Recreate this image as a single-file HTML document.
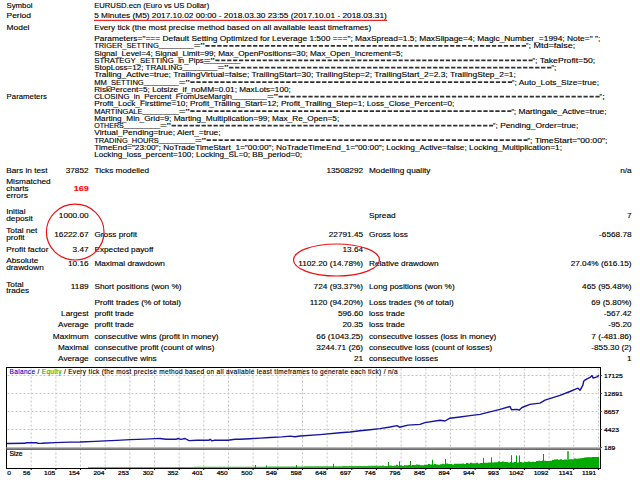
<!DOCTYPE html>
<html><head><meta charset="utf-8"><style>
html,body{margin:0;padding:0;background:#fff;width:640px;height:480px;overflow:hidden}
svg{display:block}
text{font-family:"Liberation Sans",sans-serif;font-size:7px;fill:#000}
text{stroke:#000;stroke-width:0.12px}
text.ax{font-size:6px;stroke-width:0.22px}
</style></head><body>
<svg width="640" height="480" viewBox="0 0 640 480">
<text x="6.5" y="7.6" textLength="26" lengthAdjust="spacingAndGlyphs">Symbol</text>
<text x="94.2" y="7.6" textLength="115" lengthAdjust="spacingAndGlyphs">EURUSD.ecn (Euro vs US Dollar)</text>
<text x="6.5" y="17.8" textLength="24.5" lengthAdjust="spacingAndGlyphs">Period</text>
<text x="94.2" y="17.8" textLength="292.6" lengthAdjust="spacingAndGlyphs">5 Minutes (M5) 2017.10.02 00:00 - 2018.03.30 23:55 (2017.10.01 - 2018.03.31)</text>
<rect x="94" y="19.8" width="293" height="1.1" fill="#f01010"/>
<text x="6.5" y="29.6" textLength="23" lengthAdjust="spacingAndGlyphs">Model</text>
<text x="94.2" y="29.6" textLength="277" lengthAdjust="spacingAndGlyphs">Every tick (the most precise method based on all available least timeframes)</text>
<text x="6.6" y="99" textLength="40.3" lengthAdjust="spacingAndGlyphs">Parameters</text>
<text x="94.2" y="41.0" textLength="506.1" lengthAdjust="spacingAndGlyphs">Parameters=&quot;=== Default Setting Optimized for Leverage 1:500 ===&quot;; MaxSpread=1.5; MaxSlipage=4; Magic_Number_=1994; Note=&quot; &quot;;</text>
<text x="94.2" y="48.25" textLength="64.55" lengthAdjust="spacingAndGlyphs">TRIGER_SETTING</text>
<text x="158.75" y="47.35" textLength="35.0" lengthAdjust="spacingAndGlyphs">________</text>
<text x="193.75" y="48.25" textLength="11.0" lengthAdjust="spacingAndGlyphs">=&quot;</text>
<line x1="205.35" y1="45.85" x2="526.00" y2="45.85" stroke="#303030" stroke-width="1.7" stroke-dasharray="4.27 1.7"/>
<text x="526.0" y="48.25" textLength="2.4" lengthAdjust="spacingAndGlyphs">&quot;</text>
<text x="528.4" y="48.25" textLength="46.8" lengthAdjust="spacingAndGlyphs">; Mtd=false;</text>
<text x="94.2" y="55.5" textLength="308.6" lengthAdjust="spacingAndGlyphs">Signal_Level=4; Signal_Limit=99; Max_OpenPositions=30; Max_Open_Increment=5;</text>
<text x="94.2" y="62.75" textLength="109.55" lengthAdjust="spacingAndGlyphs">STRATEGY_SETTING_in_Pips</text>
<text transform="translate(203.75 61.85) scale(1.18 1)">________</text>
<text x="203.75" y="62.75" textLength="11.0" lengthAdjust="spacingAndGlyphs">=&quot;</text>
<line x1="215.35" y1="60.35" x2="532.60" y2="60.35" stroke="#303030" stroke-width="1.7" stroke-dasharray="4.21 1.7"/>
<text x="532.6" y="62.75" textLength="2.4" lengthAdjust="spacingAndGlyphs">&quot;</text>
<text x="535" y="62.75" textLength="60.2" lengthAdjust="spacingAndGlyphs">; TakeProfit=50;</text>
<text x="94.2" y="70.0" textLength="88.3" lengthAdjust="spacingAndGlyphs">StopLoss=12; TRAILING</text>
<text x="182.5" y="69.1" textLength="35.0" lengthAdjust="spacingAndGlyphs">________</text>
<text x="217.5" y="70.0" textLength="11.0" lengthAdjust="spacingAndGlyphs">=&quot;</text>
<line x1="229.10" y1="67.60" x2="551.50" y2="67.60" stroke="#303030" stroke-width="1.7" stroke-dasharray="4.30 1.7"/>
<text x="551.5" y="70.0" textLength="2.4" lengthAdjust="spacingAndGlyphs">&quot;</text>
<text x="553.9" y="70.0" textLength="2.3" lengthAdjust="spacingAndGlyphs">;</text>
<text x="94.2" y="77.25" textLength="421.7" lengthAdjust="spacingAndGlyphs">Trailing_Active=true; TrailingVirtual=false; TrailingStart=30; TrailingStep=2; TrailingStart_2=2.3; TrailingStep_2=1;</text>
<text x="94.2" y="84.5" textLength="49.55" lengthAdjust="spacingAndGlyphs">MM_SETTING</text>
<text x="143.75" y="83.6" textLength="35.0" lengthAdjust="spacingAndGlyphs">________</text>
<text x="178.75" y="84.5" textLength="11.0" lengthAdjust="spacingAndGlyphs">=&quot;</text>
<line x1="190.35" y1="82.10" x2="512.10" y2="82.10" stroke="#303030" stroke-width="1.7" stroke-dasharray="4.29 1.7"/>
<text x="512.1" y="84.5" textLength="2.4" lengthAdjust="spacingAndGlyphs">&quot;</text>
<text x="514.5" y="84.5" textLength="84.5" lengthAdjust="spacingAndGlyphs">; Auto_Lots_Size=true;</text>
<text x="94.2" y="91.75" textLength="196.6" lengthAdjust="spacingAndGlyphs">RiskPercent=5; Lotsize_if_noMM=0.01; MaxLots=100;</text>
<text x="94.2" y="99.0" textLength="137.8" lengthAdjust="spacingAndGlyphs">CLOSING_in_Percent_FromUseMargin</text>
<text x="232" y="98.1" textLength="34.9" lengthAdjust="spacingAndGlyphs">________</text>
<text x="266.9" y="99.0" textLength="11.0" lengthAdjust="spacingAndGlyphs">=&quot;</text>
<line x1="278.50" y1="96.60" x2="599.60" y2="96.60" stroke="#303030" stroke-width="1.7" stroke-dasharray="4.28 1.7"/>
<text x="599.6" y="99.0" textLength="2.4" lengthAdjust="spacingAndGlyphs">&quot;</text>
<text x="602" y="99.0" textLength="3" lengthAdjust="spacingAndGlyphs">;</text>
<text x="94.2" y="106.25" textLength="360.2" lengthAdjust="spacingAndGlyphs">Profit_Lock_Firsttime=10; Profit_Trailing_Start=12; Profit_Trailing_Step=1; Loss_Close_Percent=0;</text>
<text x="94.2" y="113.5" textLength="48.3" lengthAdjust="spacingAndGlyphs">MARTINGALE</text>
<text x="142.5" y="112.6" textLength="36.25" lengthAdjust="spacingAndGlyphs">________</text>
<text x="178.75" y="113.5" textLength="11.0" lengthAdjust="spacingAndGlyphs">=&quot;</text>
<line x1="190.35" y1="111.10" x2="511.40" y2="111.10" stroke="#303030" stroke-width="1.7" stroke-dasharray="4.28 1.7"/>
<text x="511.4" y="113.5" textLength="2.4" lengthAdjust="spacingAndGlyphs">&quot;</text>
<text x="513.8" y="113.5" textLength="92.8" lengthAdjust="spacingAndGlyphs">; Martingale_Active=true;</text>
<text x="94.2" y="120.75" textLength="245.0" lengthAdjust="spacingAndGlyphs">Marting_Min_Grid=9; Marting_Multiplication=99; Max_Re_Open=5;</text>
<text x="94.2" y="128.0" textLength="29.55" lengthAdjust="spacingAndGlyphs">OTHERS</text>
<text x="123.75" y="127.1" textLength="36.25" lengthAdjust="spacingAndGlyphs">________</text>
<text x="160" y="128.0" textLength="11.0" lengthAdjust="spacingAndGlyphs">=&quot;</text>
<line x1="171.60" y1="125.60" x2="493.10" y2="125.60" stroke="#303030" stroke-width="1.7" stroke-dasharray="4.29 1.7"/>
<text x="493.1" y="128.0" textLength="2.4" lengthAdjust="spacingAndGlyphs">&quot;</text>
<text x="495.5" y="128.0" textLength="82.8" lengthAdjust="spacingAndGlyphs">; Pending_Order=true;</text>
<text x="94.2" y="135.25" textLength="126.4" lengthAdjust="spacingAndGlyphs">Virtual_Pending=true; Alert_=true;</text>
<text x="94.2" y="142.5" textLength="64.55" lengthAdjust="spacingAndGlyphs">TRADING_HOURS</text>
<text x="158.75" y="141.6" textLength="36.25" lengthAdjust="spacingAndGlyphs">________</text>
<text x="195" y="142.5" textLength="11.0" lengthAdjust="spacingAndGlyphs">=&quot;</text>
<line x1="206.60" y1="140.10" x2="527.60" y2="140.10" stroke="#303030" stroke-width="1.7" stroke-dasharray="4.28 1.7"/>
<text x="527.6" y="142.5" textLength="2.4" lengthAdjust="spacingAndGlyphs">&quot;</text>
<text x="530" y="142.5" textLength="77.5" lengthAdjust="spacingAndGlyphs">; TimeStart=&quot;00:00&quot;;</text>
<text x="94.2" y="149.75" textLength="467.8" lengthAdjust="spacingAndGlyphs">TimeEnd=&quot;23:00&quot;; NoTradeTimeStart_1=&quot;00:00&quot;; NoTradeTimeEnd_1=&quot;00:00&quot;; Locking_Active=false; Locking_Multiplication=1;</text>
<text x="94.2" y="157.0" textLength="207.8" lengthAdjust="spacingAndGlyphs">Locking_loss_percent=100; Locking_SL=0; BB_period=0;</text>
<text transform="translate(6.25 172.5) scale(1.18 1)" class="s">Bars in test</text>
<text transform="translate(6.25 184.4) scale(1.18 1)" class="s">Mismatched</text>
<text transform="translate(6.25 191.25) scale(1.18 1)" class="s">charts</text>
<text transform="translate(6.25 198) scale(1.18 1)" class="s">errors</text>
<text transform="translate(6.25 213.75) scale(1.18 1)" class="s">Initial</text>
<text transform="translate(6.25 221) scale(1.18 1)" class="s">deposit</text>
<text transform="translate(6.25 232.5) scale(1.18 1)" class="s">Total net</text>
<text transform="translate(6.25 239.7) scale(1.18 1)" class="s">profit</text>
<text transform="translate(6.25 252.2) scale(1.18 1)" class="s">Profit factor</text>
<text transform="translate(6.25 262.5) scale(1.18 1)" class="s">Absolute</text>
<text transform="translate(6.25 269.7) scale(1.18 1)" class="s">drawdown</text>
<text transform="translate(6.25 286.6) scale(1.18 1)" class="s">Total</text>
<text transform="translate(6.25 293.1) scale(1.18 1)" class="s">trades</text>
<text transform="translate(88.6 316) scale(1.18 1)" text-anchor="end" class="s">Largest</text>
<text transform="translate(88.6 327.2) scale(1.18 1)" text-anchor="end" class="s">Average</text>
<text transform="translate(88.6 338.6) scale(1.18 1)" text-anchor="end" class="s">Maximum</text>
<text transform="translate(88.6 349.9) scale(1.18 1)" text-anchor="end" class="s">Maximal</text>
<text transform="translate(88.6 361.25) scale(1.18 1)" text-anchor="end" class="s">Average</text>
<text transform="translate(88.6 172.5) scale(1.18 1)" text-anchor="end" class="s">37852</text>
<text transform="translate(88.6 218.4) scale(1.18 1)" text-anchor="end" class="s">1000.00</text>
<text transform="translate(88.6 237) scale(1.18 1)" text-anchor="end" class="s">16222.67</text>
<text transform="translate(88.6 251.5) scale(1.18 1)" text-anchor="end" class="s">3.47</text>
<text transform="translate(88.6 266) scale(1.18 1)" text-anchor="end" class="s">10.16</text>
<text transform="translate(88.6 289.4) scale(1.18 1)" text-anchor="end" class="s">1189</text>
<text transform="translate(88.6 191.4) scale(1.28 1)" text-anchor="end" style="fill:#ff0000;stroke:#ff0000;font-weight:bold;" font-size="7.6" class="s">169</text>
<text transform="translate(94.4 172.5) scale(1.18 1)" class="s">Ticks modelled</text>
<text transform="translate(94.4 237) scale(1.18 1)" class="s">Gross profit</text>
<text transform="translate(94.4 251.5) scale(1.18 1)" class="s">Expected payoff</text>
<text transform="translate(94.4 266) scale(1.18 1)" class="s">Maximal drawdown</text>
<text transform="translate(94.4 289.4) scale(1.18 1)" class="s">Short positions (won %)</text>
<text transform="translate(94.4 305) scale(1.18 1)" class="s">Profit trades (% of total)</text>
<text transform="translate(94.4 316) scale(1.18 1)" class="s">profit trade</text>
<text transform="translate(94.4 327.2) scale(1.18 1)" class="s">profit trade</text>
<text transform="translate(94.4 338.6) scale(1.18 1)" class="s">consecutive wins (profit in money)</text>
<text transform="translate(94.4 349.9) scale(1.18 1)" class="s">consecutive profit (count of wins)</text>
<text transform="translate(94.4 361.25) scale(1.18 1)" class="s">consecutive wins</text>
<text transform="translate(363.1 172.5) scale(1.18 1)" text-anchor="end" class="s">13508292</text>
<text transform="translate(363.1 237) scale(1.18 1)" text-anchor="end" class="s">22791.45</text>
<text transform="translate(363.1 251.5) scale(1.18 1)" text-anchor="end" class="s">13.64</text>
<text transform="translate(363.1 266) scale(1.18 1)" text-anchor="end" class="s">1102.20 (14.78%)</text>
<text transform="translate(363.1 289.4) scale(1.18 1)" text-anchor="end" class="s">724 (93.37%)</text>
<text transform="translate(363.1 305) scale(1.18 1)" text-anchor="end" class="s">1120 (94.20%)</text>
<text transform="translate(363.1 316) scale(1.18 1)" text-anchor="end" class="s">596.60</text>
<text transform="translate(363.1 327.2) scale(1.18 1)" text-anchor="end" class="s">20.35</text>
<text transform="translate(363.1 338.6) scale(1.18 1)" text-anchor="end" class="s">66 (1043.25)</text>
<text transform="translate(363.1 349.9) scale(1.18 1)" text-anchor="end" class="s">3244.71 (26)</text>
<text transform="translate(363.1 361.25) scale(1.18 1)" text-anchor="end" class="s">21</text>
<text transform="translate(369.0 172.5) scale(1.18 1)" class="s">Modelling quality</text>
<text transform="translate(369.0 218.4) scale(1.18 1)" class="s">Spread</text>
<text transform="translate(369.0 237) scale(1.18 1)" class="s">Gross loss</text>
<text transform="translate(369.0 266) scale(1.18 1)" class="s">Relative drawdown</text>
<text transform="translate(369.0 289.4) scale(1.18 1)" class="s">Long positions (won %)</text>
<text transform="translate(369.0 305) scale(1.18 1)" class="s">Loss trades (% of total)</text>
<text transform="translate(369.0 316) scale(1.18 1)" class="s">loss trade</text>
<text transform="translate(369.0 327.2) scale(1.18 1)" class="s">loss trade</text>
<text transform="translate(369.0 338.6) scale(1.18 1)" class="s">consecutive losses (loss in money)</text>
<text transform="translate(369.0 349.9) scale(1.18 1)" class="s">consecutive loss (count of losses)</text>
<text transform="translate(369.0 361.25) scale(1.18 1)" class="s">consecutive losses</text>
<text transform="translate(631.6 172.5) scale(1.18 1)" text-anchor="end" class="s">n/a</text>
<text transform="translate(631.6 218.2) scale(1.18 1)" text-anchor="end" class="s">7</text>
<text transform="translate(631.6 237) scale(1.18 1)" text-anchor="end" class="s">-6568.78</text>
<text transform="translate(631.6 266) scale(1.18 1)" text-anchor="end" class="s">27.04% (616.15)</text>
<text transform="translate(631.6 289.4) scale(1.18 1)" text-anchor="end" class="s">465 (95.48%)</text>
<text transform="translate(631.6 305) scale(1.18 1)" text-anchor="end" class="s">69 (5.80%)</text>
<text transform="translate(631.6 316) scale(1.18 1)" text-anchor="end" class="s">-567.42</text>
<text transform="translate(631.6 327.2) scale(1.18 1)" text-anchor="end" class="s">-95.20</text>
<text transform="translate(631.6 338.6) scale(1.18 1)" text-anchor="end" class="s">7 (-481.86)</text>
<text transform="translate(631.6 349.9) scale(1.18 1)" text-anchor="end" class="s">-855.30 (2)</text>
<text transform="translate(631.6 361.25) scale(1.18 1)" text-anchor="end" class="s">1</text>
<ellipse cx="75.2" cy="232.1" rx="28.8" ry="27.9" fill="none" stroke="#ee1111" stroke-width="1.2"/>
<ellipse cx="336.5" cy="260" rx="43" ry="16" fill="none" stroke="#ee1111" stroke-width="1.2"/>
<rect x="6.5" y="367.5" width="594.0" height="101.0" fill="#fff" stroke="#000" stroke-width="1"/>
<line x1="31.2" y1="368.5" x2="31.2" y2="467.5" stroke="#c4c4c4" stroke-width="1" stroke-dasharray="2 2"/>
<line x1="55.9" y1="368.5" x2="55.9" y2="467.5" stroke="#c4c4c4" stroke-width="1" stroke-dasharray="2 2"/>
<line x1="80.5" y1="368.5" x2="80.5" y2="467.5" stroke="#c4c4c4" stroke-width="1" stroke-dasharray="2 2"/>
<line x1="105.2" y1="368.5" x2="105.2" y2="467.5" stroke="#c4c4c4" stroke-width="1" stroke-dasharray="2 2"/>
<line x1="129.8" y1="368.5" x2="129.8" y2="467.5" stroke="#c4c4c4" stroke-width="1" stroke-dasharray="2 2"/>
<line x1="154.5" y1="368.5" x2="154.5" y2="467.5" stroke="#c4c4c4" stroke-width="1" stroke-dasharray="2 2"/>
<line x1="179.2" y1="368.5" x2="179.2" y2="467.5" stroke="#c4c4c4" stroke-width="1" stroke-dasharray="2 2"/>
<line x1="203.8" y1="368.5" x2="203.8" y2="467.5" stroke="#c4c4c4" stroke-width="1" stroke-dasharray="2 2"/>
<line x1="228.5" y1="368.5" x2="228.5" y2="467.5" stroke="#c4c4c4" stroke-width="1" stroke-dasharray="2 2"/>
<line x1="253.1" y1="368.5" x2="253.1" y2="467.5" stroke="#c4c4c4" stroke-width="1" stroke-dasharray="2 2"/>
<line x1="277.8" y1="368.5" x2="277.8" y2="467.5" stroke="#c4c4c4" stroke-width="1" stroke-dasharray="2 2"/>
<line x1="302.5" y1="368.5" x2="302.5" y2="467.5" stroke="#c4c4c4" stroke-width="1" stroke-dasharray="2 2"/>
<line x1="327.1" y1="368.5" x2="327.1" y2="467.5" stroke="#c4c4c4" stroke-width="1" stroke-dasharray="2 2"/>
<line x1="351.8" y1="368.5" x2="351.8" y2="467.5" stroke="#c4c4c4" stroke-width="1" stroke-dasharray="2 2"/>
<line x1="376.4" y1="368.5" x2="376.4" y2="467.5" stroke="#c4c4c4" stroke-width="1" stroke-dasharray="2 2"/>
<line x1="401.1" y1="368.5" x2="401.1" y2="467.5" stroke="#c4c4c4" stroke-width="1" stroke-dasharray="2 2"/>
<line x1="425.8" y1="368.5" x2="425.8" y2="467.5" stroke="#c4c4c4" stroke-width="1" stroke-dasharray="2 2"/>
<line x1="450.4" y1="368.5" x2="450.4" y2="467.5" stroke="#c4c4c4" stroke-width="1" stroke-dasharray="2 2"/>
<line x1="475.1" y1="368.5" x2="475.1" y2="467.5" stroke="#c4c4c4" stroke-width="1" stroke-dasharray="2 2"/>
<line x1="499.7" y1="368.5" x2="499.7" y2="467.5" stroke="#c4c4c4" stroke-width="1" stroke-dasharray="2 2"/>
<line x1="524.4" y1="368.5" x2="524.4" y2="467.5" stroke="#c4c4c4" stroke-width="1" stroke-dasharray="2 2"/>
<line x1="549.1" y1="368.5" x2="549.1" y2="467.5" stroke="#c4c4c4" stroke-width="1" stroke-dasharray="2 2"/>
<line x1="573.7" y1="368.5" x2="573.7" y2="467.5" stroke="#c4c4c4" stroke-width="1" stroke-dasharray="2 2"/>
<line x1="598.4" y1="368.5" x2="598.4" y2="467.5" stroke="#c4c4c4" stroke-width="1" stroke-dasharray="2 2"/>
<line x1="7.5" y1="375.5" x2="599.5" y2="375.5" stroke="#c4c4c4" stroke-width="1" stroke-dasharray="2 2"/>
<line x1="7.5" y1="393.5" x2="599.5" y2="393.5" stroke="#c4c4c4" stroke-width="1" stroke-dasharray="2 2"/>
<line x1="7.5" y1="411.5" x2="599.5" y2="411.5" stroke="#c4c4c4" stroke-width="1" stroke-dasharray="2 2"/>
<line x1="7.5" y1="429.5" x2="599.5" y2="429.5" stroke="#c4c4c4" stroke-width="1" stroke-dasharray="2 2"/>
<rect x="6.5" y="447" width="594.0" height="1" fill="#bcbcbc"/>
<rect x="6.5" y="448" width="594.0" height="1" fill="#8a8a8a"/>
<rect x="6.5" y="449" width="594.0" height="1" fill="#6a6a6a"/>
<polyline fill="none" stroke="#1414a0" stroke-width="1.4" stroke-linejoin="round" points="7,443.5 25,443.3 26,442.8 37,442.8 38,443.4 42,443.3 55,442.6 70,442.1 80,442 95,441.4 105,440.9 117,440.4 130,439.6 145,439.1 155,438.6 160,438.5 166,439.3 176,439.3 178,438.5 181,439.4 185,438.5 189,440.6 197,440.3 209,440.2 210,439.3 212,440.9 214,440.3 228,440.3 235,439.3 240,439.2 250,438.7 260,438.1 270,437.5 282,436.9 290,436.1 295,436.8 300,436 320,434.6 340,432.8 350,432 360,430.8 370,429.8 380,428.6 390,427 397,425.6 399.5,427.2 408,425.1 420,424.4 425,422.6 440,420.3 445,421 450,418.2 460,417 470,415.6 480,414.4 500,409.4 510,406.5 511.5,409.7 517,409.4 519,410.2 522,407.5 530,404.4 540,403.1 545,400.2 560,395.4 570,391.5 575,389.3 578,388.1 580,390.3 583,384.8 583.6,381.5 584.5,380.4 587,378.8 590,377.4 592,375.6 593.2,378.1 597,376.9 599,375.2"/>
<defs><linearGradient id="gg" gradientUnits="userSpaceOnUse" x1="88" y1="0" x2="600" y2="0"><stop offset="0" stop-color="#50c850"/><stop offset="0.5" stop-color="#30b830"/><stop offset="0.65" stop-color="#00aa00"/><stop offset="1" stop-color="#00aa00"/></linearGradient></defs>
<polygon fill="url(#gg)" points="88,468 88,467.0 90,467.0 90,467.0 92,467.0 92,467.0 94,467.0 94,467.0 96,467.0 96,467.0 98,467.0 98,467.0 100,467.0 100,467.0 102,467.0 102,467.0 104,467.0 104,467.0 106,467.0 106,467.0 108,467.0 108,467.0 110,467.0 110,467.0 112,467.0 112,467.0 114,467.0 114,467.0 116,467.0 116,467.0 118,467.0 118,467.0 120,467.0 120,466.99 122,466.99 122,466.99 124,466.99 124,466.99 126,466.99 126,466.98 128,466.98 128,466.98 130,466.98 130,466.98 132,466.98 132,466.97 134,466.97 134,466.97 136,466.97 136,466.97 138,466.97 138,466.96 140,466.96 140,466.96 142,466.96 142,466.96 144,466.96 144,466.95 146,466.95 146,466.95 148,466.95 148,466.95 150,466.95 150,466.94 152,466.94 152,466.94 154,466.94 154,466.94 156,466.94 156,466.93 158,466.93 158,466.93 160,466.93 160,466.93 162,466.93 162,466.92 164,466.92 164,466.92 166,466.92 166,466.92 168,466.92 168,466.92 170,466.92 170,466.91 172,466.91 172,466.91 174,466.91 174,466.91 176,466.91 176,466.9 178,466.9 178,466.9 180,466.9 180,466.9 182,466.9 182,466.89 184,466.89 184,466.89 186,466.89 186,466.89 188,466.89 188,466.88 190,466.88 190,466.88 192,466.88 192,466.88 194,466.88 194,466.87 196,466.87 196,466.87 198,466.87 198,466.87 200,466.87 200,466.86 202,466.86 202,466.86 204,466.86 204,466.86 206,466.86 206,466.85 208,466.85 208,466.85 210,466.85 210,466.85 212,466.85 212,466.84 214,466.84 214,466.84 216,466.84 216,466.84 218,466.84 218,466.84 220,466.84 220,466.83 222,466.83 222,466.83 224,466.83 224,466.83 226,466.83 226,466.82 228,466.82 228,466.82 230,466.82 230,466.82 232,466.82 232,466.81 234,466.81 234,466.81 236,466.81 236,466.81 238,466.81 238,466.8 240,466.8 240,466.8 242,466.8 242,466.79 244,466.79 244,466.77 246,466.77 246,466.76 248,466.76 248,466.75 250,466.75 250,466.73 252,466.73 252,466.72 254,466.72 254,466.71 256,466.71 256,466.69 258,466.69 258,466.68 260,466.68 260,466.67 262,466.67 262,466.65 264,466.65 264,466.64 266,466.64 266,466.63 268,466.63 268,466.61 270,466.61 270,466.6 272,466.6 272,466.59 274,466.59 274,466.57 276,466.57 276,466.56 278,466.56 278,466.55 280,466.55 280,466.53 282,466.53 282,466.52 284,466.52 284,466.51 286,466.51 286,466.49 288,466.49 288,466.48 290,466.48 290,466.47 292,466.47 292,466.45 294,466.45 294,466.44 296,466.44 296,466.43 298,466.43 298,466.41 300,466.41 300,466.4 302,466.4 302,466.39 304,466.39 304,466.37 306,466.37 306,466.36 308,466.36 308,466.35 310,466.35 310,466.33 312,466.33 312,466.32 314,466.32 314,466.31 316,466.31 316,466.29 318,466.29 318,466.28 320,466.28 320,466.27 322,466.27 322,466.25 324,466.25 324,466.24 326,466.24 326,466.23 328,466.23 328,466.21 330,466.21 330,466.2 332,466.2 332,466.19 334,466.19 334,466.17 336,466.17 336,466.16 338,466.16 338,466.15 340,466.15 340,466.13 342,466.13 342,466.12 344,466.12 344,466.11 346,466.11 346,466.09 348,466.09 348,466.08 350,466.08 350,466.07 352,466.07 352,466.05 354,466.05 354,466.04 356,466.04 356,466.03 358,466.03 358,466.01 360,466.01 360,466.0 362,466.0 362,465.96 364,465.96 364,465.93 366,465.93 366,465.89 368,465.89 368,465.86 370,465.86 370,465.82 372,465.82 372,465.79 374,465.79 374,465.75 376,465.75 376,465.72 378,465.72 378,465.69 380,465.69 380,465.65 382,465.65 382,465.62 384,465.62 384,466.08 386,466.08 386,466.05 388,466.05 388,465.51 390,465.51 390,465.48 392,465.48 392,465.94 394,465.94 394,465.41 396,465.41 396,464.87 398,464.87 398,465.84 400,465.84 400,465.3 402,465.3 402,465.75 404,465.75 404,465.2 406,465.2 406,465.15 408,465.15 408,465.1 410,465.1 410,465.55 412,465.55 412,465.0 414,465.0 414,464.95 416,464.95 416,464.4 418,464.4 418,464.85 420,464.85 420,465.3 422,465.3 422,465.25 424,465.25 424,464.7 426,464.7 426,464.65 428,464.65 428,464.1 430,464.1 430,464.55 432,464.55 432,464.5 434,464.5 434,463.95 436,463.95 436,464.4 438,464.4 438,464.85 440,464.85 440,464.3 442,464.3 442,463.74 444,463.74 444,464.17 446,464.17 446,463.61 448,463.61 448,464.04 450,464.04 450,463.98 452,463.98 452,464.41 454,464.41 454,463.85 456,463.85 456,463.78 458,463.78 458,463.72 460,463.72 460,463.65 462,463.65 462,463.58 464,463.58 464,464.02 466,464.02 466,462.95 468,462.95 468,463.39 470,463.39 470,462.82 472,462.82 472,463.26 474,463.26 474,463.19 476,463.19 476,462.63 478,462.63 478,463.56 480,463.56 480,463.0 482,463.0 482,462.9 484,462.9 484,462.8 486,462.8 486,462.7 488,462.7 488,462.6 490,462.6 490,462.5 492,462.5 492,462.4 494,462.4 494,462.3 496,462.3 496,462.2 498,462.2 498,461.6 500,461.6 500,462.0 502,462.0 502,461.49 504,461.49 504,461.99 506,461.99 506,461.98 508,461.98 508,462.47 510,462.47 510,461.97 512,461.97 512,462.46 514,462.46 514,461.95 516,461.95 516,462.45 518,462.45 518,462.44 520,462.44 520,461.93 522,461.93 522,462.43 524,462.43 524,461.92 526,461.92 526,461.91 528,461.91 528,461.41 530,461.41 530,461.9 532,461.9 532,461.73 534,461.73 534,462.07 536,462.07 536,460.9 538,460.9 538,460.74 540,460.74 540,461.07 542,461.07 542,460.41 544,460.41 544,460.74 546,460.74 546,461.08 548,461.08 548,460.91 550,460.91 550,460.75 552,460.75 552,460.08 554,460.08 554,459.45 556,459.45 556,459.36 558,459.36 558,459.77 560,459.77 560,459.18 562,459.18 562,460.09 564,460.09 564,459.5 566,459.5 566,459.41 568,459.41 568,459.32 570,459.32 570,459.23 572,459.23 572,459.14 574,459.14 574,458.55 576,458.55 576,458.84 578,458.84 578,458.52 580,458.52 580,458.2 582,458.2 582,457.88 584,457.88 584,457.56 586,457.56 586,457.36 588,457.36 588,457.28 590,457.28 590,457.2 592,457.2 592,457.12 594,457.12 594,457.04 596,457.04 596,456.96 598,456.96 599,456.8 599,468"/>
<rect x="255" y="465" width="1" height="3" fill="#00a000"/>
<rect x="266" y="465.5" width="1" height="2.5" fill="#00a000"/>
<rect x="296" y="465" width="1" height="3" fill="#00a000"/>
<rect x="333" y="463.8" width="1" height="4.199999999999989" fill="#00a000"/>
<rect x="388" y="462" width="1" height="6" fill="#00a000"/>
<rect x="399" y="461.3" width="1" height="6.699999999999989" fill="#00a000"/>
<rect x="410" y="461" width="1" height="7" fill="#00a000"/>
<rect x="432" y="459.7" width="1" height="8.300000000000011" fill="#00a000"/>
<rect x="445" y="459" width="1" height="9" fill="#00a000"/>
<rect x="483" y="457.8" width="1" height="10.199999999999989" fill="#00a000"/>
<rect x="491" y="457.3" width="1" height="10.699999999999989" fill="#00a000"/>
<rect x="511" y="455.2" width="1" height="12.800000000000011" fill="#00a000"/>
<rect x="516" y="455.5" width="1" height="12.5" fill="#00a000"/>
<rect x="519" y="455.5" width="1" height="12.5" fill="#00a000"/>
<rect x="543" y="454" width="1" height="14" fill="#00a000"/>
<rect x="567" y="451.2" width="2" height="8.2" fill="#40c040"/>
<line x1="31.2" y1="468.5" x2="31.2" y2="470" stroke="#000" stroke-width="1"/>
<line x1="55.9" y1="468.5" x2="55.9" y2="470" stroke="#000" stroke-width="1"/>
<line x1="80.5" y1="468.5" x2="80.5" y2="470" stroke="#000" stroke-width="1"/>
<line x1="105.2" y1="468.5" x2="105.2" y2="470" stroke="#000" stroke-width="1"/>
<line x1="129.8" y1="468.5" x2="129.8" y2="470" stroke="#000" stroke-width="1"/>
<line x1="154.5" y1="468.5" x2="154.5" y2="470" stroke="#000" stroke-width="1"/>
<line x1="179.2" y1="468.5" x2="179.2" y2="470" stroke="#000" stroke-width="1"/>
<line x1="203.8" y1="468.5" x2="203.8" y2="470" stroke="#000" stroke-width="1"/>
<line x1="228.5" y1="468.5" x2="228.5" y2="470" stroke="#000" stroke-width="1"/>
<line x1="253.1" y1="468.5" x2="253.1" y2="470" stroke="#000" stroke-width="1"/>
<line x1="277.8" y1="468.5" x2="277.8" y2="470" stroke="#000" stroke-width="1"/>
<line x1="302.5" y1="468.5" x2="302.5" y2="470" stroke="#000" stroke-width="1"/>
<line x1="327.1" y1="468.5" x2="327.1" y2="470" stroke="#000" stroke-width="1"/>
<line x1="351.8" y1="468.5" x2="351.8" y2="470" stroke="#000" stroke-width="1"/>
<line x1="376.4" y1="468.5" x2="376.4" y2="470" stroke="#000" stroke-width="1"/>
<line x1="401.1" y1="468.5" x2="401.1" y2="470" stroke="#000" stroke-width="1"/>
<line x1="425.8" y1="468.5" x2="425.8" y2="470" stroke="#000" stroke-width="1"/>
<line x1="450.4" y1="468.5" x2="450.4" y2="470" stroke="#000" stroke-width="1"/>
<line x1="475.1" y1="468.5" x2="475.1" y2="470" stroke="#000" stroke-width="1"/>
<line x1="499.7" y1="468.5" x2="499.7" y2="470" stroke="#000" stroke-width="1"/>
<line x1="524.4" y1="468.5" x2="524.4" y2="470" stroke="#000" stroke-width="1"/>
<line x1="549.1" y1="468.5" x2="549.1" y2="470" stroke="#000" stroke-width="1"/>
<line x1="573.7" y1="468.5" x2="573.7" y2="470" stroke="#000" stroke-width="1"/>
<line x1="598.4" y1="468.5" x2="598.4" y2="470" stroke="#000" stroke-width="1"/>
<line x1="600.5" y1="375.5" x2="602" y2="375.5" stroke="#555" stroke-width="1"/>
<line x1="600.5" y1="393.5" x2="602" y2="393.5" stroke="#555" stroke-width="1"/>
<line x1="600.5" y1="411.5" x2="602" y2="411.5" stroke="#555" stroke-width="1"/>
<line x1="600.5" y1="429.5" x2="602" y2="429.5" stroke="#555" stroke-width="1"/>
<line x1="600.5" y1="447.5" x2="602" y2="447.5" stroke="#555" stroke-width="1"/>
<text x="9.6" y="373.9" class="s" style="font-size:6.5px" textLength="388" lengthAdjust="spacing"><tspan style="fill:#0000c0;stroke:#0000c0">Balance</tspan> / <tspan style="fill:#00b000;stroke:#00b000">Equity</tspan> / Every tick (the most precise method based on all available least timeframes to generate each tick) / n/a</text>
<text transform="translate(9.4 456) scale(1.08 1)" class="ax" style="font-size:6.3px">Size</text>
<text transform="translate(604 377.8) scale(1.12 1)" class="ax">17125</text>
<text transform="translate(604 396) scale(1.12 1)" class="ax">12891</text>
<text transform="translate(604 413.6) scale(1.12 1)" class="ax">8657</text>
<text transform="translate(604 431.6) scale(1.12 1)" class="ax">4423</text>
<text transform="translate(604 449.8) scale(1.12 1)" class="ax">189</text>
<text transform="translate(7.2 474.5) scale(1.1 1)" class="ax">0</text>
<text transform="translate(30.4 474.5) scale(1.1 1)" text-anchor="end" class="ax">56</text>
<text transform="translate(55.1 474.5) scale(1.1 1)" text-anchor="end" class="ax">105</text>
<text transform="translate(79.7 474.5) scale(1.1 1)" text-anchor="end" class="ax">154</text>
<text transform="translate(104.4 474.5) scale(1.1 1)" text-anchor="end" class="ax">204</text>
<text transform="translate(129.0 474.5) scale(1.1 1)" text-anchor="end" class="ax">253</text>
<text transform="translate(153.7 474.5) scale(1.1 1)" text-anchor="end" class="ax">302</text>
<text transform="translate(178.4 474.5) scale(1.1 1)" text-anchor="end" class="ax">352</text>
<text transform="translate(203.0 474.5) scale(1.1 1)" text-anchor="end" class="ax">401</text>
<text transform="translate(227.7 474.5) scale(1.1 1)" text-anchor="end" class="ax">450</text>
<text transform="translate(252.3 474.5) scale(1.1 1)" text-anchor="end" class="ax">500</text>
<text transform="translate(277.0 474.5) scale(1.1 1)" text-anchor="end" class="ax">549</text>
<text transform="translate(301.7 474.5) scale(1.1 1)" text-anchor="end" class="ax">598</text>
<text transform="translate(326.3 474.5) scale(1.1 1)" text-anchor="end" class="ax">648</text>
<text transform="translate(351.0 474.5) scale(1.1 1)" text-anchor="end" class="ax">697</text>
<text transform="translate(375.6 474.5) scale(1.1 1)" text-anchor="end" class="ax">746</text>
<text transform="translate(400.3 474.5) scale(1.1 1)" text-anchor="end" class="ax">796</text>
<text transform="translate(425.0 474.5) scale(1.1 1)" text-anchor="end" class="ax">845</text>
<text transform="translate(449.6 474.5) scale(1.1 1)" text-anchor="end" class="ax">894</text>
<text transform="translate(474.3 474.5) scale(1.1 1)" text-anchor="end" class="ax">944</text>
<text transform="translate(498.9 474.5) scale(1.1 1)" text-anchor="end" class="ax">993</text>
<text transform="translate(523.6 474.5) scale(1.1 1)" text-anchor="end" class="ax">1042</text>
<text transform="translate(548.3 474.5) scale(1.1 1)" text-anchor="end" class="ax">1092</text>
<text transform="translate(572.9 474.5) scale(1.1 1)" text-anchor="end" class="ax">1141</text>
<text transform="translate(596.2 474.5) scale(1.1 1)" text-anchor="end" class="ax">1191</text>
</svg></body></html>
